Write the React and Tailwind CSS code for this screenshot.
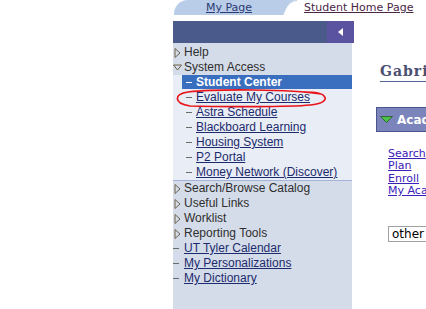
import React from "react";

const subItems = [
  "Evaluate My Courses",
  "Astra Schedule",
  "Blackboard Learning",
  "Housing System",
  "P2 Portal",
  "Money Network (Discover)",
];

function RightTri() {
  return (
    <svg width="7" height="10" viewBox="0 0 7 10" className="shrink-0">
      <path d="M1 0.5 L6 5 L1 9.5 Z" fill="none" stroke="#6e6047" strokeWidth="1" />
    </svg>
  );
}

function DownTri() {
  return (
    <svg width="9" height="7" viewBox="0 0 9 7" className="shrink-0">
      <path d="M0.5 1 L8.5 1 L4.5 6 Z" fill="none" stroke="#6e6047" strokeWidth="1" />
    </svg>
  );
}

function Dash({ color = "#6a6a6a" }) {
  return <span className="block w-[6px] h-[1px] shrink-0" style={{ backgroundColor: color }} />;
}

export default function App() {
  return (
    <div className="relative w-[426px] h-[309px] overflow-hidden bg-white font-['Liberation_Sans',Arial,sans-serif]">
      {/* tabs */}
      <div className="flex h-[15px] ml-[174px] font-['DejaVu_Sans',Verdana,sans-serif] text-[11px] leading-[15px]">
        <div className="w-[108px] h-[15px] bg-[#b9cde9] rounded-tl-[14px] flex justify-center">
          <a className="text-[#2b3a72] underline pl-[2px]">My Page</a>
        </div>
        <svg width="16" height="15" viewBox="0 0 16 15" className="shrink-0">
          <path d="M0 15 L0 0 L14 0 C8 1, 4 6, 1 15 Z" fill="#b9cde9" />
          <path d="M1 15 C4 6, 8 1, 15 0.5" fill="none" stroke="#b9cde9" strokeWidth="1" />
        </svg>
        <div className="pl-[6px]">
          <a className="text-[#4a2646] underline">Student Home Page</a>
        </div>
      </div>

      <div className="flex mt-[6px]">
        <div className="w-[173px] shrink-0" />

        {/* sidebar */}
        <div className="w-[181px] shrink-0">
          <div className="h-[22px] bg-[#4a5a8b] flex justify-end">
            <div className="w-[27px] h-[22px] bg-[#5a54a0] flex items-center justify-center">
              <svg width="5" height="8" viewBox="0 0 5 8">
                <path d="M5 0 L0 4 L5 8 Z" fill="#ffffff" />
              </svg>
            </div>
          </div>
          <div className="w-[179px] h-[266px] pt-[2px] bg-[#d5dce9] text-[12px] leading-[15px] text-[#2e2e2e]">
            <div className="flex items-center gap-[3px] h-[15px] pl-[1px]">
              <RightTri />
              <span>Help</span>
            </div>
            <div className="flex items-center gap-[2px] h-[14px]">
              <DownTri />
              <span>System Access</span>
            </div>
            <div className="bg-[#e9edf5] border-b border-[#a3b4d8]">
              <div className="h-[15px] pl-[9px]">
                <div className="h-[14px] mt-[1px] bg-[#3a6fbf] flex items-center gap-[4px] pl-[4px] text-white font-bold">
                  <Dash color="#ffffff" />
                  <span className="leading-[14px]">Student Center</span>
                </div>
              </div>
              {subItems.map((t) => (
                <div key={t} className="flex items-center gap-[4px] h-[15px] pl-[13px]">
                  <Dash />
                  <a className="text-[#1b2b6d] underline">{t}</a>
                </div>
              ))}
            </div>
            {["Search/Browse Catalog", "Useful Links", "Worklist", "Reporting Tools"].map((t) => (
              <div key={t} className="flex items-center gap-[3px] h-[15px] pl-[1px]">
                <RightTri />
                <span>{t}</span>
              </div>
            ))}
            {["UT Tyler Calendar", "My Personalizations", "My Dictionary"].map((t) => (
              <div key={t} className="flex items-center gap-[5px] h-[15px]">
                <Dash />
                <a className="text-[#1b2b6d] underline">{t}</a>
              </div>
            ))}
          </div>
        </div>

        {/* content */}
        <div className="flex-1 min-w-0 pl-[22px]">
          <div className="pl-[4px] pt-[42px]">
            <div className="font-['DejaVu_Serif',Georgia,serif] font-bold text-[14px] leading-[16px] tracking-[1px] text-[#4b4f70] whitespace-nowrap">
              Gabriela
            </div>
            <div className="h-[1px] bg-[#56649c] mt-[2px] w-[60px]" />
          </div>
          <div className="mt-[25px] h-[25px] w-[80px] bg-[#7b84bb] border border-[#4a558f] flex items-center gap-[4px] pl-[3px]">
            <svg width="13" height="7" viewBox="0 0 13 7" className="shrink-0">
              <path d="M0.5 0.5 L12.5 0.5 L6.5 6.5 Z" fill="#4cc24a" stroke="#235a22" strokeWidth="0.8" />
            </svg>
            <span className="font-['DejaVu_Sans',Verdana,sans-serif] font-bold text-[12px] text-white whitespace-nowrap">Academics</span>
          </div>
          <div className="mt-[16px] pl-[12px] font-['DejaVu_Sans',Verdana,sans-serif] text-[11px] leading-[12.3px] text-[#3a22b8] whitespace-nowrap">
            <div><a className="underline">Search</a></div>
            <div><a className="underline">Plan</a></div>
            <div><a className="underline">Enroll</a></div>
            <div><a className="underline">My Academics</a></div>
          </div>
          <div className="mt-[29px] ml-[12px] w-[80px] h-[16px] border border-[#a0a0a0] flex items-center pl-[3px] text-[12px] text-black font-['DejaVu_Sans',Verdana,sans-serif]">
            other
          </div>
        </div>
      </div>

      {/* red annotation */}
      <svg className="absolute inset-0 pointer-events-none" width="426" height="309" viewBox="0 0 426 309">
        <path
          d="M321 94 C290 89, 215 89, 188 92 C174 94, 173 103, 190 106 C220 107, 290 107, 310 105 C322 104, 328 100, 324 96 C322 93, 316 92, 304 92"
          fill="none"
          stroke="#e8141a"
          strokeWidth="1.7"
        />
      </svg>
    </div>
  );
}
